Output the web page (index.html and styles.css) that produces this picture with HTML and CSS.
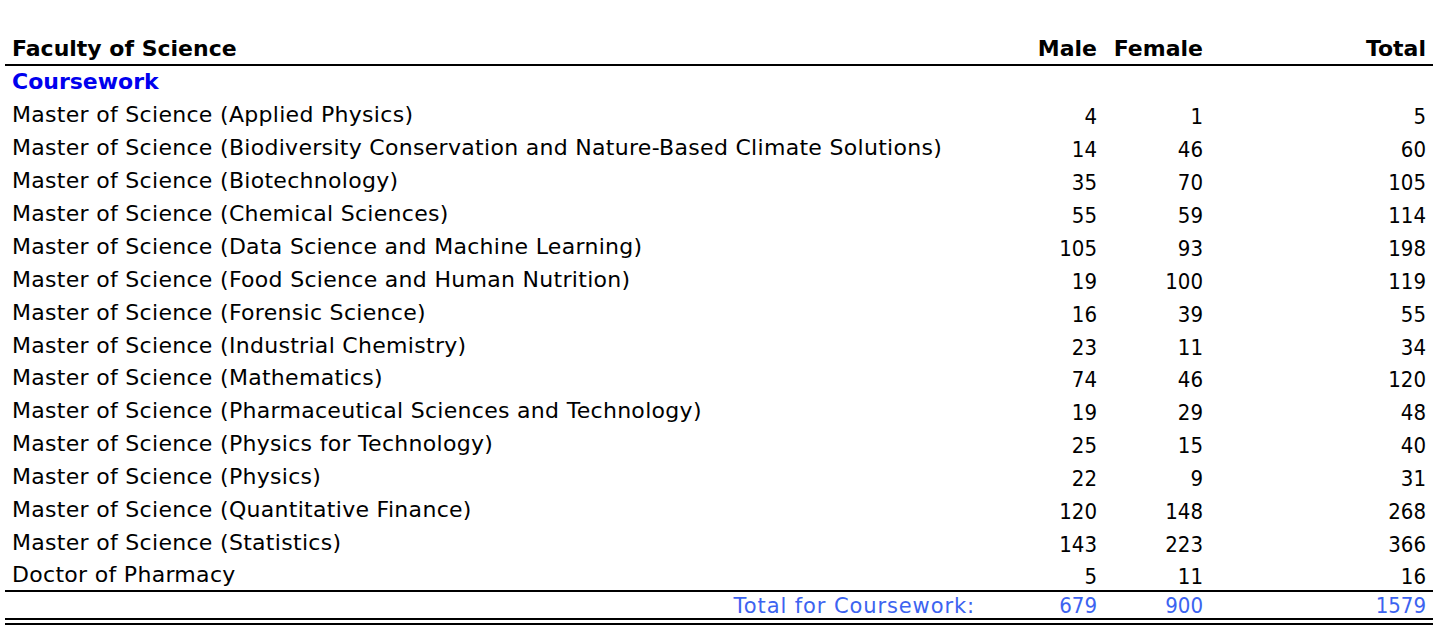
FILE: index.html
```html
<!DOCTYPE html>
<html>
<head>
<meta charset="utf-8">
<link rel="stylesheet" href="styles.css">
</head>
<body>
<table class="report">
  <thead>
    <tr class="head">
      <th class="name">Faculty of Science</th>
      <th class="num male">Male</th>
      <th class="num female">Female</th>
      <th class="num total">Total</th>
    </tr>
  </thead>
  <tbody>
    <tr class="section"><td class="name" colspan="4">Coursework</td></tr>
    <tr><td class="name">Master of Science (Applied Physics)</td><td class="num">4</td><td class="num">1</td><td class="num">5</td></tr>
    <tr><td class="name">Master of Science (Biodiversity Conservation and Nature-Based Climate Solutions)</td><td class="num">14</td><td class="num">46</td><td class="num">60</td></tr>
    <tr><td class="name">Master of Science (Biotechnology)</td><td class="num">35</td><td class="num">70</td><td class="num">105</td></tr>
    <tr><td class="name">Master of Science (Chemical Sciences)</td><td class="num">55</td><td class="num">59</td><td class="num">114</td></tr>
    <tr><td class="name">Master of Science (Data Science and Machine Learning)</td><td class="num">105</td><td class="num">93</td><td class="num">198</td></tr>
    <tr><td class="name">Master of Science (Food Science and Human Nutrition)</td><td class="num">19</td><td class="num">100</td><td class="num">119</td></tr>
    <tr><td class="name">Master of Science (Forensic Science)</td><td class="num">16</td><td class="num">39</td><td class="num">55</td></tr>
    <tr><td class="name">Master of Science (Industrial Chemistry)</td><td class="num">23</td><td class="num">11</td><td class="num">34</td></tr>
    <tr><td class="name">Master of Science (Mathematics)</td><td class="num">74</td><td class="num">46</td><td class="num">120</td></tr>
    <tr><td class="name">Master of Science (Pharmaceutical Sciences and Technology)</td><td class="num">19</td><td class="num">29</td><td class="num">48</td></tr>
    <tr><td class="name">Master of Science (Physics for Technology)</td><td class="num">25</td><td class="num">15</td><td class="num">40</td></tr>
    <tr><td class="name">Master of Science (Physics)</td><td class="num">22</td><td class="num">9</td><td class="num">31</td></tr>
    <tr><td class="name">Master of Science (Quantitative Finance)</td><td class="num">120</td><td class="num">148</td><td class="num">268</td></tr>
    <tr><td class="name">Master of Science (Statistics)</td><td class="num">143</td><td class="num">223</td><td class="num">366</td></tr>
    <tr class="last"><td class="name">Doctor of Pharmacy</td><td class="num">5</td><td class="num">11</td><td class="num">16</td></tr>
  </tbody>
  <tfoot>
    <tr class="sum">
      <td class="sum-label">Total for Coursework:</td>
      <td class="num">679</td>
      <td class="num">900</td>
      <td class="num">1579</td>
    </tr>
  </tfoot>
</table>
</body>
</html>
```

FILE: styles.css
```css
html, body {
  margin: 0;
  padding: 0;
  background: #ffffff;
}
body {
  padding: 32px 0 0 5px;
  font-family: "DejaVu Sans", Verdana, sans-serif;
  color: #000;
}
.report {
  width: 1428px;
  border-collapse: collapse;
  table-layout: fixed;
}
.report tr {
  height: 32.9px;
}
.report th, .report td {
  padding: 0;
  vertical-align: middle;
  white-space: nowrap;
  font-size: 22px;
  line-height: 24px;
}
.report td.name {
  letter-spacing: 0.3px;
  padding-top: 2px;
}
.report th {
  font-weight: bold;
  padding-top: 2px;
}
.report .head {
  height: 33px;
}
.report .name {
  text-align: left;
  padding-left: 7px;
}
.report .num {
  text-align: right;
}
.report th.male { width: 80px; }
.report th.female { width: 106px; }
.report th.total { width: 223px; padding-right: 7px; }
.report td.num:last-child { padding-right: 7px; }
.report td.num {
  font-family: "DejaVu Sans Condensed", "DejaVu Sans", sans-serif;
  font-stretch: condensed;
  padding-top: 6px;
}
.head th { border-bottom: 2px solid #000; }
.report .section td {
  color: #0000ee;
  font-weight: bold;
  letter-spacing: 0;
  padding-top: 0;
}
.last td { border-bottom: 2px solid #000; }
.report .sum {
  height: 30px;
}
.report .sum td {
  color: #3c63f0;
  font-family: "DejaVu Sans Condensed", "DejaVu Sans", sans-serif;
  font-stretch: condensed;
  border-bottom: 7px double #000;
  padding-top: 2px;
}
.report .sum td.sum-label {
  font-family: "DejaVu Sans", sans-serif;
  font-stretch: normal;
  font-size: 21px;
  letter-spacing: 0.9px;
  text-align: right;
  padding-right: 42px;
}
```
